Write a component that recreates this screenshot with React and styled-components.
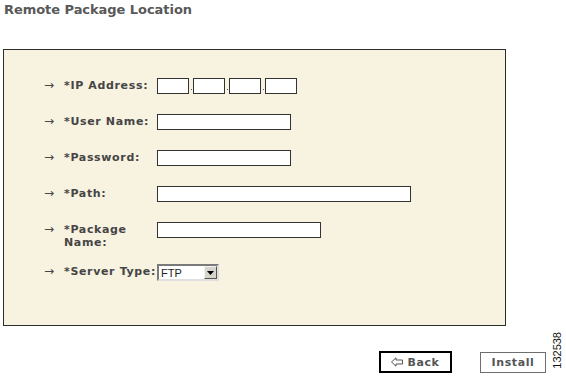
import React from "react";
import styled, { createGlobalStyle } from "styled-components";

const Global = createGlobalStyle`
  html, body { margin: 0; padding: 0; background: #fff; }
  body { font-family: "DejaVu Sans", Verdana, sans-serif; width: 566px; height: 378px; overflow: hidden; }
`;

const Page = styled.div`
  display: flex;
  flex-direction: column;
  width: 566px;
  height: 378px;
  box-sizing: border-box;
  padding: 2px 0 0 3px;
`;

const Title = styled.h1`
  margin: 0 0 0 1px;
  font-size: 13px;
  line-height: 16px;
  font-weight: bold;
  color: #595959;
  letter-spacing: -0.05px;
`;

const Panel = styled.div`
  margin-top: 31px;
  width: 503px;
  height: 277px;
  box-sizing: border-box;
  border: 1px solid #2e2e2e;
  background: #f8f2e0;
  padding: 28px 0 0 40px;
  display: flex;
  flex-direction: column;
`;

const Row = styled.div`
  display: grid;
  grid-template-columns: 20px 93px auto;
  align-items: start;
  height: ${(p) => p.$h || 36}px;
`;

const Arrow = styled.span`
  font-size: 12px;
  line-height: 14px;
  color: #444;
  padding-top: 0px;
`;

const Label = styled.span`
  font-size: 11px;
  line-height: 13px;
  font-weight: bold;
  color: #454545;
  letter-spacing: 0.65px;
  padding-top: 1px;
  white-space: nowrap;
`;

const Field = styled.div`
  width: ${(p) => p.$w}px;
  height: 16px;
  box-sizing: border-box;
  border: 1px solid #333;
  background: #fff;
`;

const IpGroup = styled.div`
  display: flex;
  align-items: flex-end;
`;

const Dot = styled.span`
  width: 4px;
  display: flex;
  justify-content: center;
  padding-bottom: 4px;
  &::after {
    content: "";
    width: 1px;
    height: 1px;
    background: #555;
  }
`;

const Select = styled.div`
  width: 62px;
  height: 17px;
  box-sizing: border-box;
  border: 2px solid;
  border-color: #7a7a7a #e0e0e0 #e0e0e0 #7a7a7a;
  background: #fff;
  display: flex;
  align-items: center;
  justify-content: space-between;
  font-family: "Liberation Sans", Arial, sans-serif;
  font-size: 11px;
  color: #222;
  padding-left: 2px;
`;

const DropBtn = styled.span`
  width: 13px;
  height: 13px;
  box-sizing: border-box;
  background: #d8d4cc;
  border: 1px solid;
  border-color: #f4f4f4 #555 #555 #f4f4f4;
  display: flex;
  align-items: center;
  justify-content: center;
`;

const Footer = styled.div`
  display: flex;
  align-items: flex-start;
  margin-top: 25px;
  padding-left: 376px;
`;

const Button = styled.button`
  box-sizing: border-box;
  width: ${(p) => p.$w}px;
  height: ${(p) => p.$h}px;
  margin-right: ${(p) => p.$mr || 0}px;
  margin-top: ${(p) => p.$mt || 0}px;
  border: ${(p) => (p.$primary ? "2px solid #000" : "1px solid #6e6e6e")};
  background: #fff;
  font-family: "DejaVu Sans", Verdana, sans-serif;
  font-size: 11px;
  font-weight: bold;
  color: #555;
  letter-spacing: 0.6px;
  display: flex;
  align-items: center;
  justify-content: center;
  gap: 4px;
  padding: 0;
  cursor: pointer;
`;

const FigNo = styled.span`
  writing-mode: vertical-rl;
  transform: rotate(180deg);
  font-family: "Liberation Sans", Arial, sans-serif;
  font-size: 11px;
  line-height: 11px;
  color: #111;
  margin-top: -19px;
  margin-left: 6px;
`;

const BackIcon = () => (
  <svg width="12" height="10" viewBox="0 0 12 10">
    <path d="M0.5 5 L5 0.8 L5 3 L11.5 3 L11.5 7 L5 7 L5 9.2 Z" fill="none" stroke="#555" strokeWidth="1" />
  </svg>
);

const DownIcon = () => (
  <svg width="7" height="4" viewBox="0 0 7 4">
    <path d="M0 0 L7 0 L3.5 4 Z" fill="#000" />
  </svg>
);

export default function App() {
  return (
    <>
      <Global />
      <Page>
        <Title>Remote Package Location</Title>
        <Panel>
          <Row>
            <Arrow>→</Arrow>
            <Label>*IP Address:</Label>
            <IpGroup>
              <Field $w={32} />
              <Dot />
              <Field $w={32} />
              <Dot />
              <Field $w={32} />
              <Dot />
              <Field $w={32} />
            </IpGroup>
          </Row>
          <Row>
            <Arrow>→</Arrow>
            <Label>*User Name:</Label>
            <Field $w={134} />
          </Row>
          <Row>
            <Arrow>→</Arrow>
            <Label>*Password:</Label>
            <Field $w={134} />
          </Row>
          <Row>
            <Arrow>→</Arrow>
            <Label>*Path:</Label>
            <Field $w={254} />
          </Row>
          <Row $h={42}>
            <Arrow>→</Arrow>
            <Label>
              *Package
              <br />
              Name:
            </Label>
            <Field $w={164} />
          </Row>
          <Row>
            <Arrow>→</Arrow>
            <Label>*Server Type:</Label>
            <Select>
              FTP
              <DropBtn>
                <DownIcon />
              </DropBtn>
            </Select>
          </Row>
        </Panel>
        <Footer>
          <Button $primary $w={73} $h={22} $mr={28}>
            <BackIcon />
            Back
          </Button>
          <Button $w={66} $h={21} $mt={1}>
            Install
          </Button>
          <FigNo>132538</FigNo>
        </Footer>
      </Page>
    </>
  );
}
